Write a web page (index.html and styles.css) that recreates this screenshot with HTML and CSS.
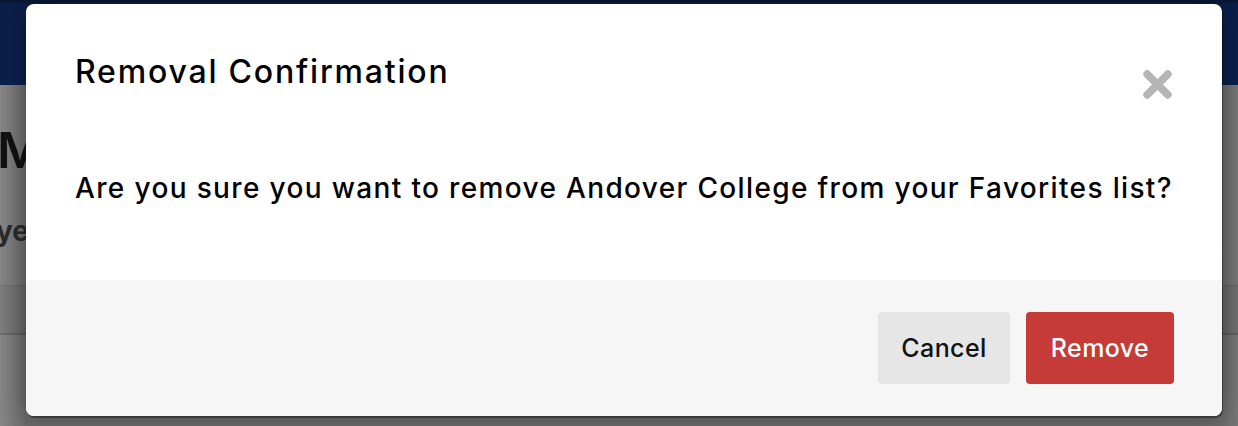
FILE: index.html
```html
<!DOCTYPE html>
<html lang="en">
<head>
<meta charset="utf-8">
<title>Removal Confirmation</title>
<link rel="stylesheet" href="styles.css">
</head>
<body>
<div class="page">
  <header class="topbar"></header>
  <main class="content">
    <h1 class="page-title">My Favorites</h1>
    <p class="page-sub">yes</p>
    <div class="band"></div>
  </main>
</div>
<div class="overlay">
  <div class="modal" role="dialog" aria-labelledby="modal-title">
    <div class="modal-body">
      <div class="modal-head">
        <h2 class="modal-title" id="modal-title">Removal Confirmation</h2>
        <button class="close" aria-label="Close">
          <svg viewBox="0 0 32 32" width="33" height="33"><path d="M6 6 L26 26 M26 6 L6 26" stroke="#b5b5b5" stroke-width="7.5" stroke-linecap="round"/></svg>
        </button>
      </div>
      <p class="modal-text">Are you sure you want to remove Andover College from your Favorites list?</p>
    </div>
    <div class="modal-foot">
      <button class="btn btn-cancel">Cancel</button>
      <button class="btn btn-remove">Remove</button>
    </div>
  </div>
</div>
</body>
</html>
```

FILE: styles.css
```css
* { box-sizing: border-box; }
html, body { margin: 0; padding: 0; }
body {
  width: 1238px;
  height: 426px;
  overflow: hidden;
  background: #7a7a7a;
  font-family: Inter, "Liberation Sans", Arial, sans-serif;
  position: relative;
}
.page { height: 426px; display: flex; flex-direction: column; }
.topbar {
  height: 85px;
  background: #0b1f4b;
  border-top: 3px solid #0a1838;
}
.content {
  flex: 1;
  background: linear-gradient(to right, #868686 0, #6a6a6a 26px, #6a6a6a 1222px, #777 1238px);
  padding-top: 40px;
  position: relative;
}
.page-title {
  margin: 0 0 0 -3px;
  font-size: 50px;
  line-height: 50px;
  font-weight: 600;
  color: #111;
}
.page-sub {
  margin: 42px 0 0 -4px;
  font-size: 28px;
  line-height: 28px;
  font-weight: 700;
  color: #2a2a2a;
}
.band {
  margin-top: 40px;
  height: 50px;
  background: rgba(0,0,0,0.06);
  border-top: 1px solid rgba(0,0,0,0.08);
  border-bottom: 2px solid rgba(0,0,0,0.12);
}
.overlay {
  position: absolute;
  inset: 0;
  padding: 4px 16px 0 26px;
}
.modal {
  width: 1196px;
  height: 412px;
  background: #fff;
  border-radius: 8px;
  overflow: hidden;
  display: flex;
  flex-direction: column;
  box-shadow: 1px 2px 0 rgba(0,0,0,0.35), 0 0 24px rgba(0,0,0,0.35);
}
.modal-body {
  flex: 0 0 276px;
  padding: 48px 48px 0 49px;
}
.modal-head {
  display: flex;
  justify-content: space-between;
  align-items: flex-start;
}
.modal-title {
  margin: 0;
  font-size: 32px;
  line-height: 40px;
  font-weight: 500;
  letter-spacing: 1.8px;
  color: #000;
}
.close {
  margin: 16px 0 0 0;
  padding: 0;
  border: 0;
  background: none;
  width: 33px;
  height: 33px;
  display: block;
}
.close svg { display: block; }
.modal-text {
  margin: 70px 0 0 0;
  font-size: 28px;
  line-height: 34px;
  font-weight: 500;
  letter-spacing: 1.35px;
  color: #000;
  white-space: nowrap;
}
.modal-foot {
  flex: 1;
  background: #f6f6f6;
  display: flex;
  justify-content: flex-end;
  align-items: flex-start;
  gap: 16px;
  padding: 32px 48px 0 48px;
}
.btn {
  height: 72px;
  border: 0;
  border-radius: 4px;
  font-family: inherit;
  font-size: 25px;
  font-weight: 500;
  letter-spacing: 0.4px;
  padding: 0;
}
.btn-cancel { width: 132px; background: #e6e6e6; color: #111; }
.btn-remove { width: 148px; background: #c63a37; color: #fff; }
```
